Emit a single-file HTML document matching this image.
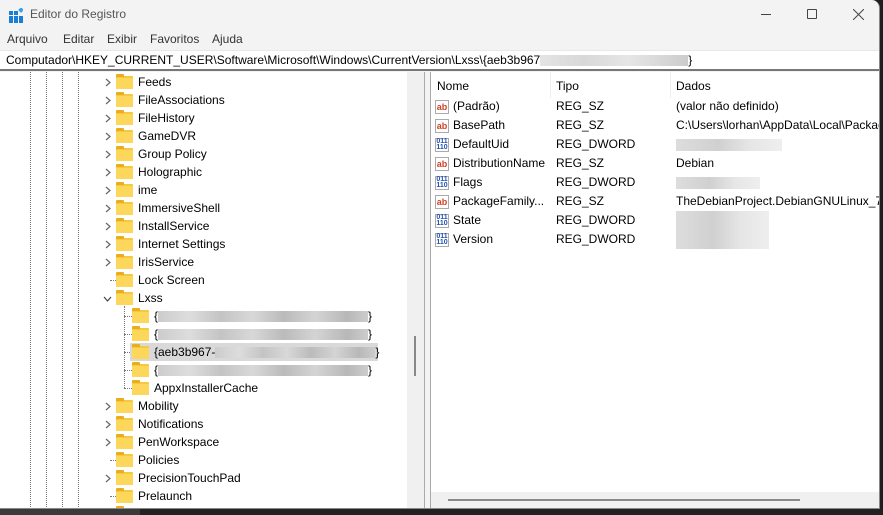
<!DOCTYPE html>
<html><head><meta charset="utf-8"><style>
*{margin:0;padding:0;box-sizing:border-box}
body{width:883px;height:515px;overflow:hidden;background:#1e1e1e;font-family:"Segoe UI","Liberation Sans",sans-serif;font-size:12px;color:#000;position:relative}
.win{position:absolute;left:0;top:0;width:880px;height:509px;background:#f3f3f3;border-right:1px solid #888;border-bottom:1px solid #888;border-top-right-radius:8px;overflow:hidden}
.abs{position:absolute}
.title{left:30px;top:7px;font-size:12px;color:#555}
.menu span{position:absolute;top:32px;font-size:12px;color:#333}
.addr{left:0;top:50px;width:880px;height:21px;background:#fff;border-bottom:2px solid #777;border-top:1px solid #e8e8e8;font-size:12px;padding:2px 0 0 6px;white-space:nowrap}
.tree{left:0;top:72px;width:407px;height:437px;background:#fff;overflow:hidden}
.row{position:absolute;height:18px;white-space:nowrap;font-size:12px;line-height:18px}
.fold{position:absolute;width:17px;height:13px;top:3px;background:#f8c83c;border-radius:1px}
.fold:before{content:"";position:absolute;left:0;top:-2px;width:8px;height:3px;background:#e9ae20;border-radius:1px 1px 0 0}
.fold:after{content:"";position:absolute;left:0;top:2px;width:17px;height:11px;background:#fdd75c}
.chev{position:absolute}
.dv{position:absolute;top:0;width:0;border-left:1px dotted #777}
.blur{display:inline-block;height:11px;vertical-align:middle;background:linear-gradient(90deg,#ccc,#ddd 15%,#c4c4c4 30%,#d8d8d8 45%,#bbb 60%,#d4d4d4 75%,#b8b8b8 90%,#ccc)}
.vsb{left:407px;top:72px;width:17px;height:437px;background:#f0f0f0}
.right{left:431px;top:72px;width:449px;height:437px;background:#fff}
.hdr{position:absolute;top:7px;font-size:12px}
.rrow{position:absolute;left:0;height:19px;line-height:19px;font-size:12px;white-space:nowrap;width:449px}
.ic{position:absolute;left:4px;top:3px;width:14px;height:14px;border:1px solid #aaa;background:#fff;font-size:9px;font-weight:bold;line-height:12px;text-align:center}
.ab{color:#d04020}
.dw{color:#2050b0;font-size:7px;line-height:6px}
</style></head><body>
<div class="win">
<svg class="abs" style="left:9px;top:8px" width="14" height="15"><g fill="#1a7fd4"><rect x="0" y="3" width="4" height="4"/><rect x="5" y="3" width="4" height="4"/><rect x="0" y="8" width="4" height="4"/><rect x="5" y="8" width="4" height="4"/><rect x="10" y="8" width="4" height="4"/><rect x="0" y="12" width="4" height="3"/><rect x="5" y="12" width="4" height="3"/><rect x="10" y="12" width="4" height="3"/></g><rect x="10" y="0" width="4" height="4" fill="#3aa0e8" transform="rotate(45 12 2)"/></svg>
<div class="abs title">Editor do Registro</div>
<div class="abs" style="left:761px;top:14px;width:10px;height:1px;background:#444"></div>
<div class="abs" style="left:807px;top:9px;width:10px;height:10px;border:1px solid #444;border-radius:1px"></div>
<svg class="abs" style="left:853px;top:9px" width="11" height="11"><path d="M0 0L11 11M11 0L0 11" stroke="#444" stroke-width="1"/></svg>
<div class="menu"><span style="left:7px">Arquivo</span><span style="left:63px">Editar</span><span style="left:107px">Exibir</span><span style="left:150px">Favoritos</span><span style="left:212px">Ajuda</span></div>
<div class="abs addr">Computador\HKEY_CURRENT_USER\Software\Microsoft\Windows\CurrentVersion\Lxss\{aeb3b967<span class="blur" style="width:148px;background:linear-gradient(90deg,#e4e4e4,#d8d8d8 30%,#e6e6e6 60%,#ccc)"></span>}</div>
<div class="abs tree">
<div class="dv" style="left:30px;height:437px"></div><div class="dv" style="left:46px;height:437px"></div><div class="dv" style="left:62px;height:437px"></div><div class="dv" style="left:78px;height:437px"></div>
<div class="dv" style="left:124px;top:234px;height:82px"></div>
<div id="rows"></div>
</div>
<div class="abs vsb"><div class="abs" style="left:7px;top:264px;width:2px;height:40px;background:#888"></div></div>
<div class="abs" style="left:424px;top:72px;width:7px;height:437px;background:#f3f3f3;border-left:1px solid #aaa;border-right:1px solid #aaa"></div>
<div class="abs right">
<div class="hdr" style="left:6px">Nome</div><div class="hdr" style="left:125px">Tipo</div><div class="hdr" style="left:245px">Dados</div>
<div class="abs" style="left:119px;top:0;width:1px;height:26px;background:#eee"></div>
<div class="abs" style="left:239px;top:0;width:1px;height:26px;background:#eee"></div>
<div id="rr"></div>
<div class="abs" style="left:0;top:420px;width:449px;height:17px;background:#f0f0f0"><div class="abs" style="left:17px;top:7px;width:352px;height:2px;background:#888"></div></div>
</div>
</div>
<div class="abs" style="left:0;top:509px;width:883px;height:6px;background:#222"></div>
<div class="abs" style="left:0;top:509px;width:140px;height:6px;background:#3a3a3a"></div>
<script>
var t=document.getElementById('rows'),h='';
var items=[['Feeds',1],['FileAssociations',1],['FileHistory',1],['GameDVR',1],['Group Policy',1],['Holographic',1],['ime',1],['ImmersiveShell',1],['InstallService',1],['Internet Settings',1],['IrisService',1],['Lock Screen',0],['Lxss',2],
['c1',3],['c2',3],['c3',4],['c4',3],['AppxInstallerCache',5],['Mobility',1],['Notifications',1],['PenWorkspace',1],['Policies',0],['PrecisionTouchPad',1],['Prelaunch',0],['x',1]];
items.forEach(function(it,i){var y=1+i*18,n=it[0],k=it[1];
if(k>=3){var txt=k==4?'{aeb3b967-<span class="blur" style="width:160px"></span>}':(k==5?n:'{<span class="blur" style="width:210px"></span>}');
h+='<div class="dv" style="left:124px;top:'+(y+9)+'px;height:0;width:8px;border-left:0;border-top:1px dotted #777"></div>';
h+='<div class="row" style="left:130px;top:'+y+'px;'+(k==4?'background:#d9d9d9;width:248px;':'')+'"><div class="fold" style="left:2px"></div><span style="position:absolute;left:24px">'+txt+'</span></div>';}
else{if(k==1)h+='<svg class="chev" style="left:105px;top:'+(y+5)+'px" width="6" height="9"><path d="M1 1L5 4.5L1 8" fill="none" stroke="#666" stroke-width="1.2"/></svg>';
if(k==2)h+='<svg class="chev" style="left:103px;top:'+(y+7)+'px" width="9" height="6"><path d="M1 1L4.5 5L8 1" fill="none" stroke="#444" stroke-width="1.2"/></svg>';
if(k==0)h+='<div class="dv" style="left:110px;top:'+(y+9)+'px;height:0;width:6px;border-left:0;border-top:1px dotted #777"></div>';
h+='<div class="row" style="left:116px;top:'+y+'px"><div class="fold" style="left:0"></div><span style="position:absolute;left:22px">'+n+'</span></div>';}});
t.innerHTML+=h;
var r=[['ab','(Padrão)','REG_SZ','(valor não definido)'],['ab','BasePath','REG_SZ','C:\\Users\\lorhan\\AppData\\Local\\Packages'],['dw','DefaultUid','REG_DWORD','#106'],['ab','DistributionName','REG_SZ','Debian'],['dw','Flags','REG_DWORD','#84'],['ab','PackageFamily...','REG_SZ','TheDebianProject.DebianGNULinux_76'],['dw','State','REG_DWORD','#93'],['dw','Version','REG_DWORD','#93']];
var g='';r.forEach(function(x,i){var y=25+i*19;var d=x[3][0]=='#'?'<span class="blur" style="width:'+x[3].slice(1)+'px;height:'+(i>=6?19:12)+'px;background:linear-gradient(90deg,#ddd,#d0d0d0 40%,#e6e6e6 70%,#eee)"></span>':x[3];
g+='<div class="rrow" style="top:'+y+'px"><div class="ic '+x[0]+'">'+(x[0]=='ab'?'ab':'011<br>110')+'</div><span style="position:absolute;left:22px">'+x[1]+'</span><span style="position:absolute;left:125px">'+x[2]+'</span><span style="position:absolute;left:245px">'+d+'</span></div>';});
document.getElementById('rr').innerHTML=g;
</script>
</body></html>
